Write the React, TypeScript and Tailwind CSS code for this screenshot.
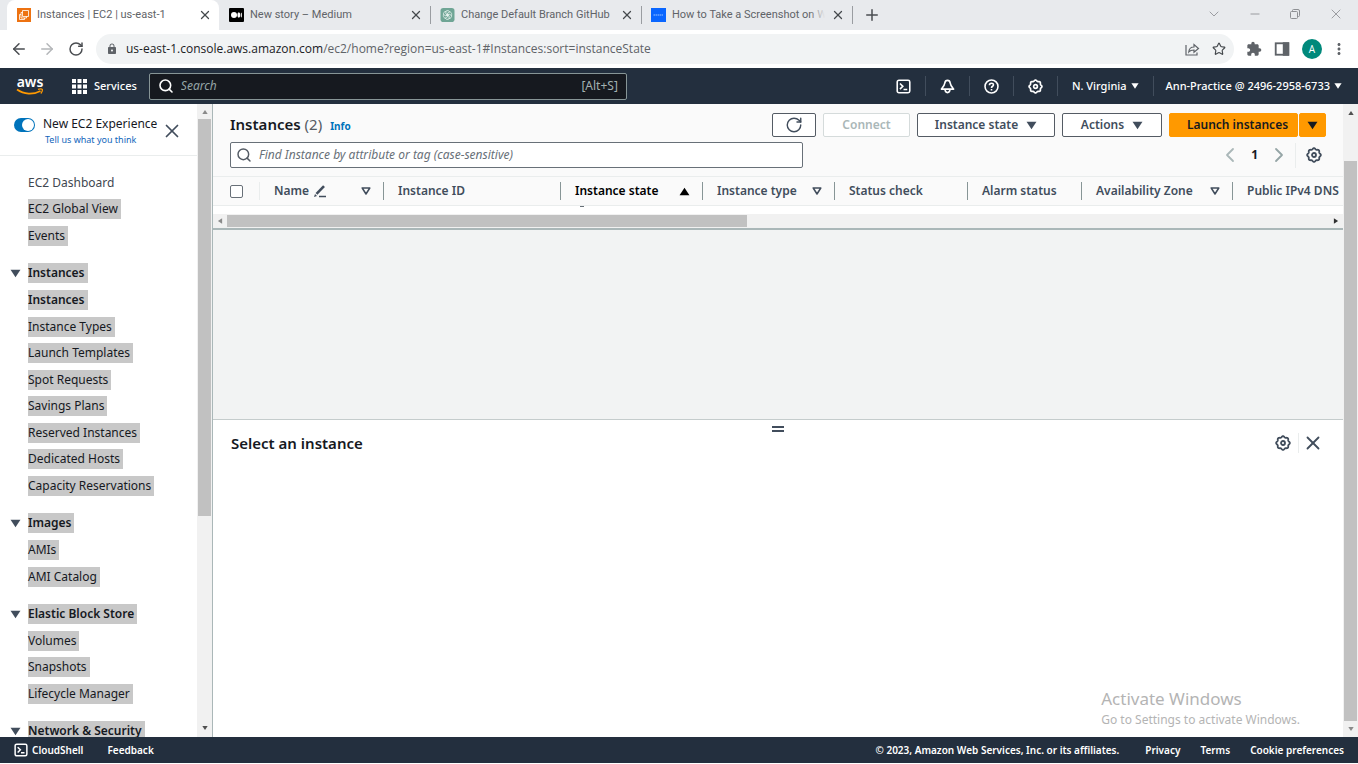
import { useId, type ReactNode } from "react";
import { ArrowLeft, ArrowRight, RotateCw, Search, X, Plus, Star, ChevronLeft, ChevronRight, ChevronDown, Minus } from "lucide-react";
import { MdLock, MdExtension, MdMoreVert } from "react-icons/md";

const gearPath =
  Array.from({ length: 96 }, (_, i) => {
    const a = (i / 96) * Math.PI * 2;
    const r = 6.3 + 0.55 * Math.cos(8 * a);
    return `${i ? "L" : "M"}${(8 + r * Math.cos(a)).toFixed(2)} ${(8 + r * Math.sin(a)).toFixed(2)}`;
  }).join("") + "Z";

function Gear({ className }: { className: string }) {
  return (
    <svg viewBox="0 0 16 16" fill="none" stroke="currentColor" strokeWidth="1.8" className={className} aria-hidden="true">
      <path d={gearPath} strokeLinejoin="round" />
      <circle cx="8" cy="8" r="2" />
    </svg>
  );
}

function Caret({ className = "size-2.5", up = false }: { className?: string; up?: boolean }) {
  return (
    <svg viewBox="0 0 10 10" className={className} fill="currentColor" aria-hidden="true">
      <path d={up ? "M0.5 8.5h9L5 1.500z" : "M0.5 1.5h9L5 8.500z"} />
    </svg>
  );
}

function HollowCaret() {
  return (
    <svg viewBox="0 0 10 10" className="size-2.5 shrink-0" fill="none" stroke="currentColor" strokeWidth="1.5" aria-hidden="true">
      <path d="M1.2 2h7.6L5 8z" strokeLinejoin="round" />
    </svg>
  );
}

function Terminal({ className }: { className: string }) {
  return (
    <svg viewBox="0 0 16 16" fill="none" stroke="currentColor" strokeWidth="1.7" className={className} aria-hidden="true">
      <rect x="1.3" y="1.3" width="13.4" height="13.4" rx="1.8" />
      <path d="M4.2 4.8 7.3 7.8 4.2 10.8M8 11.2h4" />
    </svg>
  );
}

function Bell() {
  return (
    <svg viewBox="0 0 16 16" fill="none" stroke="currentColor" strokeWidth="1.7" className="size-[15px]" aria-hidden="true">
      <path d="M8 1.500C6.400 1.500 5.300 2.800 5.100 4.400 4.800 7 3.600 8.300 1.500 10.800h13C12.400 8.300 11.200 7 10.900 4.400 10.700 2.800 9.600 1.500 8 1.500z" strokeLinejoin="round" />
      <path d="M5.400 11c0 2.300 1.200 3.500 2.600 3.500s2.600-1.200 2.600-3.500" />
    </svg>
  );
}

function Help() {
  return (
    <svg viewBox="0 0 16 16" fill="none" stroke="currentColor" strokeWidth="1.7" className="size-[15px]" aria-hidden="true">
      <circle cx="8" cy="8" r="6.9" />
      <path d="M5.8 6.600c0-2.900 4.500-2.700 4.300-.2C10 7.800 8 7.700 8 9.500M8 10.700v1.500" />
    </svg>
  );
}

function Ec2Icon() {
  return (
    <svg viewBox="0 0 14 14" width="14" height="14" className="shrink-0" aria-hidden="true">
      <rect width="14" height="14" fill="#ed7211" />
      <g fill="none" stroke="#fff" strokeWidth=".8">
        <path d="M5.5 2.500h6v6h-6z" />
        <path d="M5.5 4.500H4V10h5.500V8.500M4 6.500H2.500v5h5V10" />
      </g>
    </svg>
  );
}

function MediumIcon() {
  return (
    <svg viewBox="0 0 15 14" width="15" height="14" className="shrink-0" aria-hidden="true">
      <rect width="15" height="14" rx="1" fill="#000" />
      <circle cx="5" cy="7" r="3" fill="#fff" />
      <ellipse cx="9.8" cy="7" rx="1.4" ry="2.8" fill="#fff" />
      <ellipse cx="12.3" cy="7" rx=".6" ry="2.5" fill="#fff" />
    </svg>
  );
}

function ChatIcon() {
  return (
    <svg viewBox="0 0 15 15" width="15" height="14" className="shrink-0" aria-hidden="true">
      <rect width="15" height="15" rx="3" fill="#6fa595" />
      <g fill="none" stroke="#e8f3ef" strokeWidth=".8">
        {[0, 60, 120, 180, 240, 300].map((a) => (
          <path key={a} transform={`rotate(${a} 7.5 7.5)`} d="M7.5 5.500 10.200 4c1.600.8 2.200 2.300 1.500 4M7.500 5.500V8.800" />
        ))}
      </g>
    </svg>
  );
}

function BlueIcon() {
  return (
    <svg viewBox="0 0 15 14" width="15" height="14" className="shrink-0" aria-hidden="true">
      <rect width="15" height="14" fill="#0a66ff" />
      <path d="M2.5 7h10" stroke="#9cc4ff" strokeWidth="1" strokeDasharray="1.5 .5" />
    </svg>
  );
}

function Tab({ icon, title, active = false, divider = false, fade = false }: { icon: ReactNode; title: string; active?: boolean; divider?: boolean; fade?: boolean }) {
  return (
    <div className={active ? "flex w-[212px] items-center gap-1.5 rounded-t-lg bg-white pr-[7px] pl-2.5" : "relative flex w-[211px] items-center gap-1.5 pr-[7px] pl-2.5"}>
      {icon}
      <span className="relative min-w-0 flex-1 overflow-hidden text-[11px] whitespace-nowrap text-[#5f6368]">
        {title}
        {fade && <span className="absolute inset-y-0 right-0 w-4 bg-linear-to-r from-transparent to-[#e8eaed]" />}
      </span>
      <button aria-label={`Close ${title}`} className="text-[#45494d]">
        <X className="size-3.5" strokeWidth={2.2} />
      </button>
      {divider && <span className="absolute top-1.5 -right-px h-[18px] w-px bg-[#9a9da1]" />}
    </div>
  );
}

function BrowserChrome() {
  return (
    <div className="shrink-0 bg-white">
      <div className="flex h-[30px] bg-[#e8eaed] pl-[7px] font-[Roboto,sans-serif]">
        <Tab active icon={<Ec2Icon />} title="Instances | EC2 | us-east-1" />
        <Tab icon={<MediumIcon />} title="New story – Medium" divider />
        <Tab icon={<ChatIcon />} title="Change Default Branch GitHub" divider />
        <Tab icon={<BlueIcon />} title="How to Take a Screenshot on Wi" divider fade />
        <button aria-label="New tab" className="ml-[11px] text-[#4a4d51]">
          <Plus className="size-[18px]" strokeWidth={2} />
        </button>
        <div className="ml-auto flex items-center gap-[26px] pr-3.5 pb-[3px] text-[#8e9094]">
          <button aria-label="Search tabs"><ChevronDown className="size-4" strokeWidth={1.3} /></button>
          <button aria-label="Minimize"><Minus className="size-3.5" strokeWidth={1.5} /></button>
          <button aria-label="Restore">
            <svg viewBox="0 0 14 14" className="size-3.5" fill="none" stroke="currentColor" aria-hidden="true">
              <rect x="2.5" y="4.5" width="7" height="7" rx="1" />
              <path d="M4.500 4.500V3.500q0-1 1-1h4.500q1.500 0 1.500 1.500v4.500q0 1-1 1H9.500" />
            </svg>
          </button>
          <button aria-label="Close window"><X className="size-4" strokeWidth={1.3} /></button>
        </div>
      </div>
      <div className="flex h-[38px] items-center pr-3.5 pl-2.5 font-['Open_Sans',sans-serif]">
        <button aria-label="Back" className="text-[#4a4d51]"><ArrowLeft className="size-[18px]" strokeWidth={2} /></button>
        <button aria-label="Forward" className="ml-2.5 text-[#b4b6b9]"><ArrowRight className="size-[18px]" strokeWidth={2} /></button>
        <button aria-label="Reload" className="ml-3 text-[#4a4d51]"><RotateCw className="size-4" strokeWidth={2.2} /></button>
        <div className="ml-3 flex h-[30px] flex-1 items-center rounded-full bg-[#f1f3f4] pr-2 pl-2.5 text-[#5f6368]">
          <MdLock className="size-3" />
          <span className="ml-2 text-xs">
            <span className="text-[#202124]">us-east-1.console.aws.amazon.com</span>/ec2/home?region=us-east-1#Instances:sort=instanceState
          </span>
          <button aria-label="Share" className="ml-auto">
            <svg viewBox="0 0 16 16" className="size-4" fill="none" stroke="currentColor" strokeWidth="1.2" aria-hidden="true">
              <path d="M2 4v10h11v-2.500M4.800 11C5 7.500 7 6 10 6V3.500L14.500 7.500 10 11.300V9C7.500 9 6 9.500 4.800 11z" />
            </svg>
          </button>
          <button aria-label="Bookmark" className="ml-3 text-[#45494d]"><Star className="size-3.5" strokeWidth={2} /></button>
        </div>
        <div className="flex items-center gap-3 pl-3 text-[#5f6368]">
          <button aria-label="Extensions"><MdExtension className="size-4" /></button>
          <button aria-label="Side panel">
            <svg viewBox="0 0 14 14" className="size-4" fill="none" stroke="currentColor" strokeWidth="1.6" aria-hidden="true">
              <rect x="1.5" y="2" width="11" height="10" />
              <path d="M8.5 2h4v10h-4z" fill="currentColor" />
            </svg>
          </button>
          <button aria-label="Profile" className="size-5 rounded-full bg-[#00897b] text-[10px] text-white">A</button>
          <button aria-label="Menu" className="-mx-1"><MdMoreVert className="size-[18px]" /></button>
        </div>
      </div>
    </div>
  );
}

const Rule = () => <span className="h-5 w-px bg-[#414d5c]" />;

function ConsoleNav() {
  return (
    <header className="flex h-9 shrink-0 items-center bg-[#232f3e] px-4 text-[11px] font-medium text-white">
      <a href="#home" aria-label="aws" className="flex w-7 flex-col items-center">
        <span className="text-sm leading-3 font-semibold">aws</span>
        <svg viewBox="0 0 28 8" className="h-2 w-7" fill="none" stroke="#f90" strokeWidth="1.7" aria-hidden="true">
          <path d="M1 1.500C8 6.500 17 7 24.500 3" />
          <path d="M22 1.300c2-.5 4-.4 4.300.2s-.4 2.500-1.500 4" strokeWidth="1.3" />
        </svg>
      </a>
      <span className="mx-3.5"><Rule /></span>
      <button className="flex items-center gap-[7px]">
        <svg viewBox="0 0 15 15" className="size-[15px]" fill="currentColor" aria-hidden="true">
          {[0, 5.5, 11].flatMap((x) => [0, 5.5, 11].map((y) => <rect key={`${x}-${y}`} x={x} y={y} width="4" height="4" />))}
        </svg>
        Services
      </button>
      <label className="ml-3 flex h-[27px] w-[478px] items-center gap-[7px] rounded-xs border border-[#879596] bg-[#16191f] px-2 text-xs font-normal text-[#a3b1b1]">
        <Search className="size-4 text-white" strokeWidth={2.4} />
        <input aria-label="Search" placeholder="Search" className="min-w-0 flex-1 bg-transparent outline-none placeholder:text-[#95a5a6] placeholder:italic" />
        <span>[Alt+S]</span>
      </label>
      <div className="ml-auto flex items-center">
        <button aria-label="CloudShell" className="mr-3.5"><Terminal className="size-[15px]" /></button>
        <Rule />
        <button aria-label="Notifications" className="px-3.5"><Bell /></button>
        <Rule />
        <button aria-label="Support" className="px-3.5"><Help /></button>
        <Rule />
        <button aria-label="Settings" className="px-3.5"><Gear className="size-[15px]" /></button>
        <Rule />
        <button className="flex items-center gap-1 px-3.5">N. Virginia <Caret className="size-2" /></button>
        <Rule />
        <button className="flex items-center gap-1 pl-3">Ann-Practice @ 2496-2958-6733 <Caret className="size-2" /></button>
      </div>
    </header>
  );
}

function Marked({ children, plain = false }: { children: ReactNode; plain?: boolean }) {
  return <span className={plain ? "leading-5" : "bg-[#c8c8c8] pr-[3px] leading-5"}>{children}</span>;
}

function NavGroup({ items, className, bold, plain }: { items: string[]; className: string; bold?: string; plain?: string }) {
  return (
    <ul className={`grid auto-rows-fr pl-7 text-xs text-[#16191f] ${className}`}>
      {items.map((t) => (
        <li key={t} className="flex items-center">
          <a href={`#${t}`} className={t === bold ? "flex font-semibold" : t === plain ? "flex text-[#414750]" : "flex"}>
            <Marked plain={t === plain}>{t}</Marked>
          </a>
        </li>
      ))}
    </ul>
  );
}

function NavHeading({ children }: { children: ReactNode }) {
  return (
    <button className="mt-3.5 mb-1 flex h-5 items-center gap-[7px] pl-2.5 text-xs font-semibold text-[#16191f]">
      <Caret className="size-[11px] text-[#414d5c]" />
      <Marked>{children}</Marked>
    </button>
  );
}

function Sidebar() {
  const id = useId();
  return (
    <aside className="flex w-[213px] shrink-0 overflow-hidden border-r border-[#aab7b8]">
      <nav className="min-w-0 flex-1">
        <div className="flex h-[52px] items-start border-b border-[#eaeded] pt-2 pl-3.5">
          <label htmlFor={id} className="relative mt-1.5 flex h-3.5 w-[21px] items-center justify-end rounded-full bg-[#0073bb] p-px">
            <input id={id} type="checkbox" role="switch" defaultChecked aria-label="New EC2 Experience" className="absolute inset-0 opacity-0" />
            <span className="size-3 rounded-full bg-white" />
          </label>
          <div className="ml-2 whitespace-nowrap">
            <div className="text-xs leading-6 text-[#16191f]">New EC2 Experience</div>
            <a href="#feedback" className="block pl-0.5 text-[9px] leading-2 text-[#1166bb]">Tell us what you think</a>
          </div>
          <button aria-label="Close navigation" className="mt-2 ml-1 text-[#414d5c]"><X className="size-[22px]" strokeWidth={1.9} /></button>
        </div>
        <NavGroup className="mt-3.5 h-[79px]" items={["EC2 Dashboard", "EC2 Global View", "Events"]} plain="EC2 Dashboard" />
        <NavHeading>Instances</NavHeading>
        <NavGroup
          className="h-[212px]"
          bold="Instances"
          items={["Instances", "Instance Types", "Launch Templates", "Spot Requests", "Savings Plans", "Reserved Instances", "Dedicated Hosts", "Capacity Reservations"]}
        />
        <NavHeading>Images</NavHeading>
        <NavGroup className="h-[53px]" items={["AMIs", "AMI Catalog"]} />
        <NavHeading>Elastic Block Store</NavHeading>
        <NavGroup className="h-[79px]" items={["Volumes", "Snapshots", "Lifecycle Manager"]} />
        <NavHeading>Network &amp; Security</NavHeading>
      </nav>
      <div className="flex w-[15px] flex-col items-center bg-[#f1f1f1] px-px">
        <span className="flex h-[15px] items-center text-[#8a8a8a]"><Caret up className="h-1.5 w-2" /></span>
        <span className="h-[397px] w-full bg-[#c1c1c1]" />
        <span className="mt-auto flex h-[18px] items-center text-[#505050]"><Caret className="h-1.5 w-2" /></span>
      </div>
    </aside>
  );
}

const button = "flex h-6 items-center justify-center rounded-xs border text-xs font-semibold";

function Toolbar() {
  return (
    <div className="bg-[#fafafa] px-[17px]">
      <div className="flex h-[38px] items-center pt-1 whitespace-nowrap">
        <h1 className="pb-0.5 text-[15px] font-semibold text-[#16191f]">
          Instances <span className="font-normal text-[#545b64]">(2)</span>
        </h1>
        <a href="#info" className="mt-0.5 ml-2 text-[10px] font-bold text-[#0073bb]">Info</a>
        <div className="ml-auto flex gap-[7px] text-[#414d5c]">
          <button aria-label="Refresh" className={`${button} w-11 border-[#545b64] bg-white`}><RotateCw className="size-[18px]" strokeWidth={1.9} /></button>
          <button disabled className={`${button} w-[87px] border-[#d5dbdb] bg-white text-[#aab7b8]`}>Connect</button>
          <button className={`${button} w-[138px] gap-2 border-[#545b64] bg-white`}>Instance state <Caret className="size-[11px]" /></button>
          <button className={`${button} w-[100px] gap-2 border-[#545b64] bg-white`}>Actions <Caret className="size-[11px]" /></button>
          <div className="flex gap-px text-[#16191f]">
            <button className={`${button} w-[129px] border-[#f90] bg-[#f90] pl-2`}>Launch instances</button>
            <button aria-label="More launch options" className={`${button} w-[27px] border-[#f90] bg-[#f90]`}><Caret className="size-[11px]" /></button>
          </div>
        </div>
      </div>
      <div className="flex h-[34px] items-start">
        <label className="flex h-[26px] w-[573px] items-center gap-[7px] rounded-xs border border-[#687078] bg-white px-[5px] text-[#545b64]">
          <Search className="size-4" strokeWidth={2.2} />
          <input aria-label="Find Instance" placeholder="Find Instance by attribute or tag (case-sensitive)" className="min-w-0 flex-1 text-xs outline-none placeholder:text-[#687078] placeholder:italic" />
        </label>
        <div className="ml-auto flex h-[26px] items-center pr-1">
          <button aria-label="Previous page" className="text-[#aab7b8]"><ChevronLeft className="size-6" strokeWidth={1.8} /></button>
          <span className="px-[9px] text-xs font-bold text-[#16191f]">1</span>
          <button aria-label="Next page" className="text-[#95a5a6]"><ChevronRight className="size-6" strokeWidth={1.8} /></button>
          <span className="ml-1 h-[25px] w-px bg-[#eaeded]" />
          <button aria-label="Preferences" className="ml-2.5 text-[#414d5c]"><Gear className="size-4" /></button>
        </div>
      </div>
    </div>
  );
}

function Head({ children, icon, strong = false, last = false }: { children: ReactNode; icon?: ReactNode; strong?: boolean; last?: boolean }) {
  return (
    <th scope="col" className={strong ? "p-0 font-semibold text-[#000]" : "p-0 font-semibold text-[#414d5c]"}>
      <div className={last ? "flex h-[18px] items-center pl-3.5 whitespace-nowrap" : "flex h-[18px] items-center justify-between border-r border-[#879596] pr-3 pl-3.5 whitespace-nowrap"}>
        <span className="flex items-center gap-1">{children}</span>
        {icon}
      </div>
    </th>
  );
}

function InstancesTable() {
  return (
    <div className="overflow-hidden bg-white">
      <table className="w-full table-fixed border-collapse text-left text-xs">
        <colgroup>
          <col className="w-[47px]" />
          <col className="w-[124px]" />
          <col className="w-[177px]" />
          <col className="w-[142px]" />
          <col className="w-[132px]" />
          <col className="w-[133px]" />
          <col className="w-[114px]" />
          <col className="w-[151px]" />
          <col />
        </colgroup>
        <thead>
          <tr className="h-[29px] border-y border-[#eaeded] bg-[#fafafa]">
            <th scope="col" className="p-0">
              <div className="flex h-[18px] items-center border-r border-[#eaeded] pl-[17px]">
                <input type="checkbox" aria-label="Select all instances" className="size-[13px] appearance-none rounded-xs border border-[#687078] bg-white" />
              </div>
            </th>
            <Head icon={<HollowCaret />}>
              Name
              <svg viewBox="0 0 14 14" className="size-3.5" fill="none" stroke="currentColor" strokeWidth="1.5" aria-hidden="true">
                <path d="M6 12.500h7" />
                <path d="M3.500 9.800 11 2.200" strokeWidth="2.6" />
                <path d="M1 13l1-3 2 2z" fill="currentColor" stroke="none" />
              </svg>
            </Head>
            <Head>Instance ID</Head>
            <Head strong icon={<Caret up className="size-[11px]" />}>Instance state</Head>
            <Head icon={<HollowCaret />}>Instance type</Head>
            <Head>Status check</Head>
            <Head>Alarm status</Head>
            <Head icon={<HollowCaret />}>Availability Zone</Head>
            <Head last>Public IPv4 DNS</Head>
          </tr>
        </thead>
      </table>
      <div className="flex h-2 pl-[367px]">
        <span className="h-px w-1 bg-[#687078]" />
      </div>
      <div className="flex h-3.5 items-center bg-[#f1f1f1]">
        <span className="flex w-3.5 justify-center text-[#8a8a8a]"><Caret className="h-1.5 w-2 rotate-90" /></span>
        <span className="h-3 w-[46%] bg-[#c1c1c1]" />
        <span className="ml-auto flex w-3.5 justify-center text-[#303030]"><Caret className="h-1.5 w-2 -rotate-90" /></span>
      </div>
    </div>
  );
}

function SplitPanel() {
  return (
    <section className="relative min-h-0 flex-1 border-t border-[#c5cccc] bg-white">
      <div className="flex h-[18px] items-center justify-center">
        <button aria-label="Resize panel" className="h-1.5 w-3 border-y-2 border-[#414d5c]" />
      </div>
      <div className="-mt-[7px] flex items-center pr-[19px] pl-[18px] text-[#414d5c]">
        <h2 className="text-[15px] leading-6 font-semibold text-[#16191f]">Select an instance</h2>
        <button aria-label="Panel preferences" className="ml-auto"><Gear className="size-4" /></button>
        <span className="mr-[3px] ml-[7px] h-5 w-px bg-[#eaeded]" />
        <button aria-label="Close panel"><X className="size-[22px]" strokeWidth={2} /></button>
      </div>
      <div className="absolute right-[43px] bottom-2 text-[#b4b4b4]">
        <div className="text-[17px] leading-6">Activate Windows</div>
        <div className="text-xs leading-[18px]">Go to Settings to activate Windows.</div>
      </div>
    </section>
  );
}

function Footer() {
  return (
    <footer className="mb-px flex h-[26px] shrink-0 items-center bg-[#232f3e] px-3.5 text-[10px] font-semibold text-white">
      <button className="flex items-center gap-1"><Terminal className="size-3.5" /> CloudShell</button>
      <a href="#feedback" className="ml-6">Feedback</a>
      <span className="ml-auto">© 2023, Amazon Web Services, Inc. or its affiliates.</span>
      <a href="#privacy" className="ml-[26px]">Privacy</a>
      <a href="#terms" className="ml-5">Terms</a>
      <a href="#cookies" className="ml-5">Cookie preferences</a>
    </footer>
  );
}

export default function App() {
  return (
    <div className="flex h-screen flex-col overflow-hidden bg-white font-['Noto_Sans',sans-serif]">
      <BrowserChrome />
      <ConsoleNav />
      <div className="flex min-h-0 flex-1">
        <Sidebar />
        <main className="flex min-w-0 flex-1 flex-col">
          <Toolbar />
          <InstancesTable />
          <div className="h-[191px] shrink-0 border-t-2 border-[#aab7b8] bg-[#f2f3f3]" />
          <SplitPanel />
        </main>
        <div className="flex w-[15px] flex-col items-center bg-[#f1f1f1] px-px">
          <span className="flex h-[17px] items-center text-[#505050]"><Caret up className="h-1.5 w-2" /></span>
          <span className="mt-10 w-full flex-1 bg-[#c1c1c1]" />
          <span className="flex h-4 items-center text-[#8a8a8a]"><Caret className="h-1.5 w-2" /></span>
        </div>
      </div>
      <Footer />
    </div>
  );
}
